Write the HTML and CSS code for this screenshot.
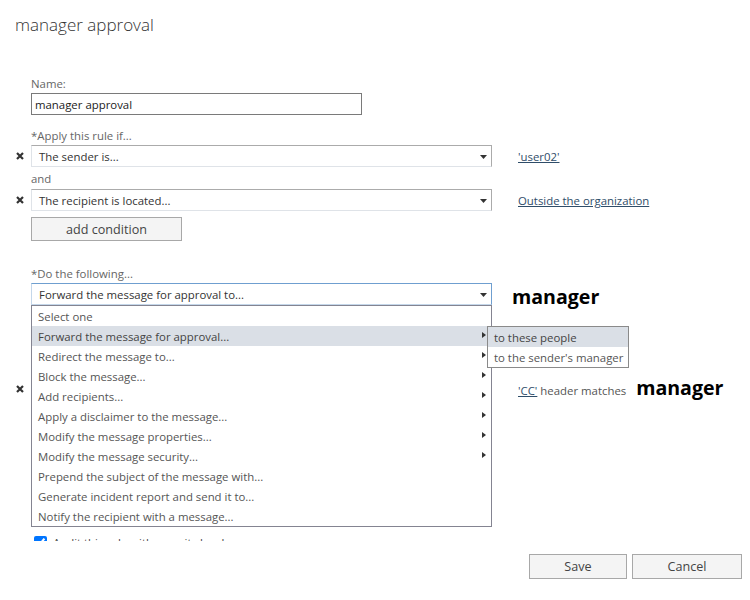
FILE: index.html
```html
<!DOCTYPE html>
<html lang="en">
<head>
    <meta charset="UTF-8">
    <title>manager approval</title>
    <link rel="stylesheet" href="styles.css">
</head>
<body>
    <div class="dialog">
        <h1 class="title">manager approval</h1>

        <div class="content">
            <label class="label">Name:</label>
            <input class="text-input" type="text" value="manager approval">

            <div class="label section">*Apply this rule if...</div>
            <div class="rule-row">
                <span class="remove"><svg width="8" height="8" viewBox="0 0 8 8"><path d="M1 1l6 6M7 1l-6 6" stroke="#333" stroke-width="2.2"/></svg></span>
                <div class="select"><span>The sender is...</span><svg width="7" height="4" viewBox="0 0 7 4"><path d="M0 0h7L3.5 4z" fill="#333"/></svg></div>
                <a class="value-link" href="#">'user02'</a>
            </div>
            <div class="label and">and</div>
            <div class="rule-row">
                <span class="remove"><svg width="8" height="8" viewBox="0 0 8 8"><path d="M1 1l6 6M7 1l-6 6" stroke="#333" stroke-width="2.2"/></svg></span>
                <div class="select"><span>The recipient is located...</span><svg width="7" height="4" viewBox="0 0 7 4"><path d="M0 0h7L3.5 4z" fill="#333"/></svg></div>
                <a class="value-link" href="#">Outside the organization</a>
            </div>
            <button class="btn add-btn">add condition</button>

            <div class="label section-lg">*Do the following...</div>
            <div class="rule-row">
                <span></span>
                <div class="select-wrap">
                    <div class="select focused"><span>Forward the message for approval to...</span><svg width="7" height="4" viewBox="0 0 7 4"><path d="M0 0h7L3.5 4z" fill="#333"/></svg></div>
                    <ul class="dropdown">
                        <li>Select one</li>
                        <li class="has-sub hover">Forward the message for approval...
                            <ul class="submenu">
                                <li class="hover">to these people</li>
                                <li>to the sender's manager</li>
                            </ul>
                        </li>
                        <li class="has-sub">Redirect the message to...</li>
                        <li class="has-sub">Block the message...</li>
                        <li class="has-sub">Add recipients...</li>
                        <li class="has-sub">Apply a disclaimer to the message...</li>
                        <li class="has-sub">Modify the message properties...</li>
                        <li class="has-sub">Modify the message security...</li>
                        <li>Prepend the subject of the message with...</li>
                        <li>Generate incident report and send it to...</li>
                        <li>Notify the recipient with a message...</li>
                    </ul>
                </div>
                <span class="big-value action-value">manager</span>
            </div>

            <!-- exception row, mostly covered by the open dropdown -->
            <div class="rule-row except-row">
                <span class="remove"><svg width="8" height="8" viewBox="0 0 8 8"><path d="M1 1l6 6M7 1l-6 6" stroke="#333" stroke-width="2.2"/></svg></span>
                <div class="select"></div>
                <div class="value-text"><a class="value-link" href="#">'CC'</a> header matches <span class="big-value inline">manager</span></div>
            </div>

            <div class="check-row">
                <input type="checkbox" checked>
                <span>Audit this rule with severity level:</span>
            </div>
        </div>

        <div class="footer">
            <button class="btn footer-btn save">Save</button>
            <button class="btn footer-btn cancel">Cancel</button>
        </div>
    </div>
</body>
</html>
```

FILE: styles.css
```css
* {
    box-sizing: border-box;
}

body {
    margin: 0;
    background-color: #fff;
    color: #333;
    font-family: "Open Sans", "Noto Sans", sans-serif;
    font-size: 11.4px;
}

.dialog {
    display: flex;
    flex-direction: column;
    height: 600px;
}

.title {
    margin: 0;
    height: 50px;
    padding: 13px 0 0 15px;
    font-size: 17px;
    font-weight: 300;
    line-height: 24px;
    color: #333;
}

.content {
    height: 491px;
    overflow: hidden;
    padding: 25px 0 0 31px;
}

.label {
    display: block;
    line-height: 17px;
    color: #666;
}

.text-input {
    display: block;
    width: 331px;
    height: 22px;
    margin-top: 1px;
    padding: 0 3px;
    border: 1px solid #7a7a7a;
    font: inherit;
    color: #222;
    outline: none;
}

.section {
    margin-top: 12px;
}

.section-lg {
    margin-top: 24px;
}

.and {
    margin-top: 3px;
}

.rule-row {
    display: grid;
    grid-template-columns: 31px 461px auto;
    align-items: center;
    margin: 1px 0 0 -31px;
}

.and + .rule-row {
    margin-top: 2px;
}

.remove {
    display: flex;
    justify-self: end;
    margin-right: 7px;
}

.select {
    display: flex;
    align-items: center;
    justify-content: space-between;
    height: 22px;
    padding: 1px 4px 0 7px;
    border: 1px solid;
    border-color: #ababab #ababab #dfe3e8 #dfe3e8;
    background-color: #fff;
    color: #333;
}

.select.focused {
    border-color: #6f9fd0 #6f9fd0 #c4d7ea #c4d7ea;
}

.value-link {
    margin-left: 26px;
    color: #2f4d69;
    text-decoration: underline;
}

.value-text {
    margin-left: 26px;
    color: #555;
}

.value-text .value-link {
    margin-left: 0;
}

.big-value {
    margin-left: 20px;
    font-size: 19.6px;
    font-weight: 700;
    color: #000;
    line-height: 22px;
}

.action-value {
    align-self: end;
    line-height: 16px;
}

.big-value.inline {
    margin-left: 7px;
}

.select-wrap {
    position: relative;
}

.dropdown {
    position: absolute;
    top: 100%;
    left: 0;
    width: 461px;
    margin: 0;
    padding: 0;
    list-style: none;
    background-color: #fff;
    border: 1px solid #848491;
    z-index: 10;
}

.dropdown li {
    position: relative;
    height: 20px;
    padding: 0 6px;
    line-height: 22px;
    color: #555;
    white-space: nowrap;
}

.dropdown li.hover {
    background-color: #dadfe6;
    color: #444;
}

.dropdown .has-sub::after {
    content: "";
    position: absolute;
    right: 5px;
    top: 6px;
    border-left: 4px solid #333;
    border-top: 3.5px solid transparent;
    border-bottom: 3.5px solid transparent;
}

.submenu {
    position: absolute;
    top: 0;
    left: 455px;
    width: 142px;
    margin: 0;
    padding: 0;
    list-style: none;
    background-color: #fff;
    border: 1px solid #8a8a8a;
    z-index: 11;
}

.submenu li {
    padding: 0 6px;
}

.except-row {
    margin-top: 72px;
}

.except-row .remove {
    margin-top: 2px;
}

.btn {
    background-color: #f4f4f4;
    border: 1px solid #a8a8a8;
    color: #444;
    font-family: inherit;
    cursor: pointer;
}

.add-btn {
    display: block;
    width: 151px;
    height: 24px;
    margin-top: 6px;
    font-size: 12.6px;
}

.check-row {
    display: flex;
    align-items: center;
    height: 16px;
    margin-top: 135px;
    color: #444;
}

.check-row input {
    width: 13px;
    height: 13px;
    margin: 0 6px 0 3px;
}

.footer {
    display: flex;
    justify-content: flex-end;
    gap: 5px;
    padding: 13px 8px 0 0;
}

.footer-btn {
    height: 25px;
    font-size: 12.6px;
}

.save {
    width: 98px;
}

.cancel {
    width: 110px;
}
```
